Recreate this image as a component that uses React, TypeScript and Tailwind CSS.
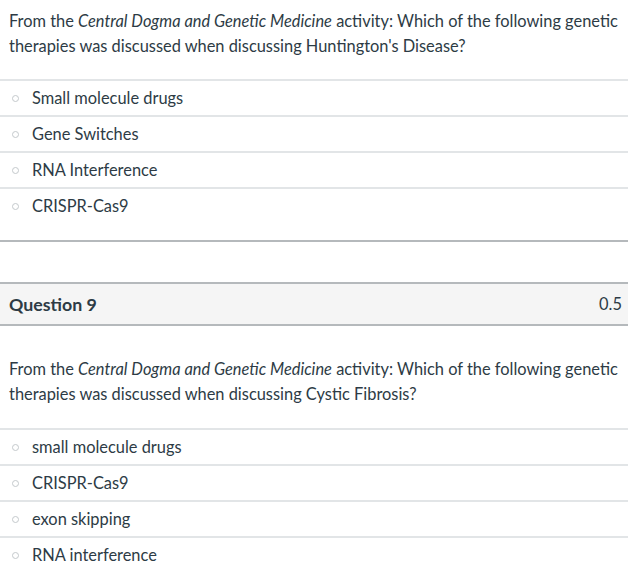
import * as React from "react";

const font = { fontFamily: "Lato, 'Open Sans', sans-serif" };

function Radio() {
    return <span className="inline-block h-[7px] w-[7px] shrink-0 rounded-full border border-[#c4c9cc] bg-white" />;
}

function Answers({ items }: { items: string[] }) {
    return (
        <div>
            {items.map((a) => (
                <div key={a} className="flex h-[36px] items-center gap-[13px] border-t-2 border-[#e2e5e7] pl-[12px]">
                    <Radio />
                    <span className="text-[16.4px] leading-[20px] text-[#2d3b45]">{a}</span>
                </div>
            ))}
        </div>
    );
}

function Prompt({ disease }: { disease: string }) {
    return (
        <p className="px-[9px] text-[16.4px] leading-[25px] text-[#2d3b45]">
            From the <i>Central Dogma and Genetic Medicine</i> activity: Which of the following genetic therapies was
            discussed when discussing {disease}?
        </p>
    );
}

export default function App() {
    return (
        <div className="w-[628px] bg-white" style={font}>
            <div className="pt-[8px]">
                <Prompt disease="Huntington's Disease" />
                <div className="mt-[21px]">
                    <Answers items={["Small molecule drugs", "Gene Switches", "RNA Interference", "CRISPR-Cas9"]} />
                </div>
                <div className="h-[17px]" />
            </div>
            <div className="border-t-2 border-[#b5b9bc]" />
            <div className="h-[40px]" />
            <div className="flex h-[44px] items-center justify-between border-y-2 border-[#b5b9bc] bg-[#f5f5f5] pl-[9px] pr-[6px]">
                <span className="text-[17.8px] font-bold text-[#2d3b45]">Question 9</span>
                <span className="text-[16.4px] text-[#2d3b45]">0.5</span>
            </div>
            <div className="pt-[30px]">
                <Prompt disease="Cystic Fibrosis" />
                <div className="mt-[22px]">
                    <Answers items={["small molecule drugs", "CRISPR-Cas9", "exon skipping", "RNA interference"]} />
                </div>
            </div>
        </div>
    );
}
